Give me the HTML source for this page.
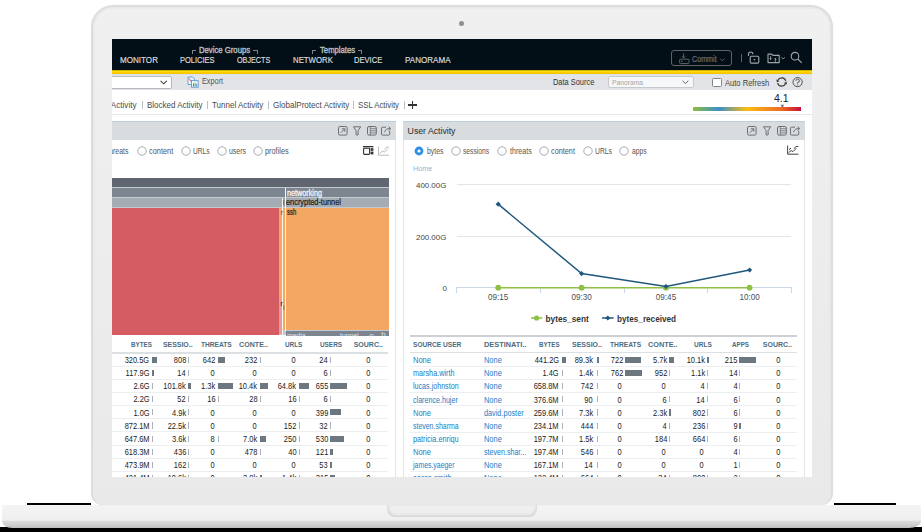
<!DOCTYPE html>
<html><head><meta charset="utf-8">
<style>
*{margin:0;padding:0;box-sizing:border-box}
html,body{width:922px;height:532px;overflow:hidden;background:#fff;font-family:"Liberation Sans",sans-serif}
.a{position:absolute}
.t{position:absolute;line-height:1;white-space:pre}
#blk{left:0;top:527.3px;width:922px;height:6px;background:#000}
#base{left:2px;top:505px;width:919px;height:22.5px;background:linear-gradient(#f4f4f4 0,#efefef 66%,#dadada 71%,#cdcdcd 88%,#bcbcbc 100%);border-radius:2px 1px 12px 10px/2px 1px 7px 7px}
#shl{left:27px;top:503px;width:64px;height:2px;background:#000}
#shr{left:833.5px;top:503px;width:62px;height:2px;background:#000}
#notch{left:387px;top:505px;width:150px;height:12px;background:linear-gradient(#f1f1f1,#ececec);border-radius:0 0 8px 8px;box-shadow:inset 0 -2px 3px rgba(0,0,0,.07),inset 3px 0 3px rgba(0,0,0,.04),inset -3px 0 3px rgba(0,0,0,.04)}
#bezel{left:90.5px;top:4.8px;width:742.5px;height:500.2px;background:linear-gradient(#f0f0f0,#e9e9e9);border:2.6px solid #dddddd;border-bottom:none;border-radius:22px 22px 12px 12px;box-shadow:inset 0 0 0 1.6px #e8e8e8,0 0 2px rgba(0,0,0,.05)}
#cam{left:459px;top:20.8px;width:5px;height:5px;border-radius:50%;background:#8f8f8f}
#screen{left:112px;top:39px;width:700px;height:438px;background:#fff;overflow:hidden}
#inner{position:absolute;left:-112px;top:-39px;width:922px;height:532px}
svg{position:absolute;overflow:visible}
</style></head><body>
<div class="a" id="blk"></div>
<div class="a" id="shl"></div>
<div class="a" id="shr"></div>
<div class="a" id="base"></div>
<div class="a" id="bezel"></div>
<div class="a" id="notch"></div>
<div class="a" id="cam"></div>
<div class="a" id="screen"><div id="inner">
<div class="a" style="left:112.00px;top:39.00px;width:700.00px;height:31.00px;background:#030f16;"></div>
<div class="a" style="left:112.00px;top:69.60px;width:700.00px;height:4.20px;background:linear-gradient(#b89400 0,#ffe000 35%,#f9cc00 65%,#f5c000 100%);"></div>
<div class="a" style="left:112.00px;top:73.80px;width:700.00px;height:15.80px;background:#e2e4e7;"></div>
<div class="a" style="left:112.00px;top:73.80px;width:700.00px;height:1.00px;background:#d9e0ee;"></div>
<div class="a" style="left:192.30px;top:50.10px;width:1.00px;height:4.20px;background:#7d8388;"></div>
<div class="a" style="left:192.30px;top:50.10px;width:4.20px;height:1.00px;background:#7d8388;"></div>
<div class="a" style="left:253.30px;top:50.10px;width:4.20px;height:1.00px;background:#7d8388;"></div>
<div class="a" style="left:256.50px;top:50.10px;width:1.00px;height:4.20px;background:#7d8388;"></div>
<div class="a" style="left:312.10px;top:50.10px;width:1.00px;height:4.20px;background:#7d8388;"></div>
<div class="a" style="left:312.10px;top:50.10px;width:4.20px;height:1.00px;background:#7d8388;"></div>
<div class="a" style="left:358.00px;top:50.10px;width:4.20px;height:1.00px;background:#7d8388;"></div>
<div class="a" style="left:361.20px;top:50.10px;width:1.00px;height:4.20px;background:#7d8388;"></div>
<div class="a" style="left:671.10px;top:50.30px;width:61.10px;height:16.00px;background:transparent;border:1.2px solid #5d6369;border-radius:3px"></div>
<svg style="left:679px;top:53px" width="11" height="11" viewBox="0 0 11 11"><path d="M4.6 0.4V4.8M3 3.4L4.6 5L6.2 3.4" stroke="#5d6369" stroke-width="1" fill="none"/><rect x="0.6" y="6.2" width="9.4" height="4.4" rx="1" stroke="#5d6369" stroke-width="1" fill="none"/><rect x="2" y="7.8" width="1.5" height="1.2" fill="#5d6369"/></svg>
<svg style="left:720px;top:58px" width="5" height="4" viewBox="0 0 5 4"><path d="M0.3 0.6L2.3 2.8L4.3 0.6" stroke="#5d6369" stroke-width="0.9" fill="none"/></svg>
<div class="a" style="left:741.20px;top:54.40px;width:1.00px;height:8.10px;background:#5d6369;"></div>
<svg style="left:747px;top:51px" width="14" height="13" viewBox="0 0 14 13"><path d="M1.5 5V3.2A2.2 2.2 0 0 1 5.9 3.2" stroke="#a0a5aa" stroke-width="1.1" fill="none"/><rect x="3.2" y="5.3" width="8.6" height="6.8" rx="1.2" stroke="#a0a5aa" stroke-width="1.1" fill="none"/><path d="M6.3 8L8.5 8L7.4 9.7Z" fill="#a0a5aa"/></svg>
<svg style="left:766.5px;top:53px" width="19" height="11" viewBox="0 0 19 11"><path d="M1 1.1H4.8L6 2.4H12.2V9.6H1Z" stroke="#a0a5aa" stroke-width="1.1" fill="none" stroke-linejoin="round"/><path d="M3.6 3.2V6.6M2.6 5.5L3.6 6.6L4.6 5.5M8.4 8.8V5.2M7.4 6.3L8.4 5.2L9.4 6.3" stroke="#a0a5aa" stroke-width="0.9" fill="none"/><path d="M14.6 4.3L16.2 6L17.8 4.3" stroke="#a0a5aa" stroke-width="0.9" fill="none"/></svg>
<svg style="left:790px;top:52px" width="13" height="12" viewBox="0 0 13 12"><circle cx="5" cy="4.2" r="3.8" stroke="#a0a5aa" stroke-width="1.1" fill="none"/><path d="M7.8 7L11.8 10.8" stroke="#a0a5aa" stroke-width="1.1"/></svg>
<div class="a" style="left:100.00px;top:75.50px;width:71.60px;height:13.00px;background:#fff;border:1px solid #b5b9bd;border-radius:2px"></div>
<svg style="left:160px;top:80px" width="8" height="5" viewBox="0 0 8 5"><path d="M0.6 0.8L3.7 3.8L6.8 0.8" stroke="#444" stroke-width="1.1" fill="none"/></svg>
<svg style="left:187px;top:76px" width="12" height="12" viewBox="0 0 12 12"><path d="M1 1H5.5L7.5 3V8.5H1Z" stroke="#5a9ad0" stroke-width="0.9" fill="#eef4fa"/><rect x="4.5" y="4.6" width="6.6" height="6.6" stroke="#5a9ad0" stroke-width="0.9" fill="#f4f8fc"/><path d="M2.3 2.5L4.2 5.5" stroke="#d24b4b" stroke-width="0.9"/><rect x="6" y="7.5" width="1" height="3" fill="#d24b4b"/><rect x="7.6" y="6.5" width="1" height="4" fill="#56b04f"/><rect x="9.1" y="8" width="1" height="2.5" fill="#4a8fd0"/></svg>
<div class="a" style="left:608.20px;top:75.80px;width:85.40px;height:12.70px;background:#f6f7f8;border:1px solid #c6cace;border-radius:2px"></div>
<svg style="left:682px;top:80px" width="7" height="5" viewBox="0 0 7 5"><path d="M0.5 0.8L3.4 3.6L6.3 0.8" stroke="#666" stroke-width="1" fill="none"/></svg>
<div class="a" style="left:712.20px;top:77.50px;width:9.70px;height:9.10px;background:#fff;border:1px solid #80858a;border-radius:1.5px"></div>
<svg style="left:776px;top:76.5px" width="12" height="11" viewBox="0 0 12 11"><path d="M9.76 3.91A4.2 4.2 0 0 0 1.89 3.23M1.64 6.09A4.2 4.2 0 0 0 9.51 6.78" stroke="#3a3a3a" stroke-width="1.2" fill="none"/><path d="M0.35 2.51L3.43 3.95L0.97 5.5Z M11.05 7.5L7.97 6.06L10.43 4.5Z" fill="#3a3a3a"/></svg>
<svg style="left:792px;top:76.5px" width="12" height="11" viewBox="0 0 12 11"><circle cx="5.6" cy="5.1" r="4.6" stroke="#555" stroke-width="1" fill="none"/><path d="M4 3.8A1.7 1.7 0 1 1 5.7 5.4V6.6" stroke="#555" stroke-width="1" fill="none"/><circle cx="5.7" cy="8" r="0.55" fill="#555"/></svg>
<svg style="left:779.6px;top:103.8px" width="5" height="6" viewBox="0 0 5 6"><path d="M0.5 0.6H4.3L2.4 5Z" fill="#4a6076" stroke="#fff" stroke-width="0.6"/></svg>
<div class="a" style="left:693.00px;top:107.20px;width:107.80px;height:3.70px;background:linear-gradient(90deg,#8dbe3c 0%,#3b8fc9 24%,#fbbd12 50%,#f28a22 70%,#ef6b1e 82%,#c2103c 100%);"></div>
<div class="a" style="left:112.00px;top:114.30px;width:700.00px;height:1.00px;background:#e5e7e9;"></div>
<div class="a" style="left:141.70px;top:100.60px;width:1.00px;height:8.00px;background:#b9c0c6;"></div>
<div class="a" style="left:206.80px;top:100.60px;width:1.00px;height:8.00px;background:#b9c0c6;"></div>
<div class="a" style="left:267.70px;top:100.60px;width:1.00px;height:8.00px;background:#b9c0c6;"></div>
<div class="a" style="left:353.25px;top:100.60px;width:1.00px;height:8.00px;background:#b9c0c6;"></div>
<div class="a" style="left:404.10px;top:100.60px;width:1.00px;height:8.00px;background:#b9c0c6;"></div>
<div class="a" style="left:408.20px;top:104.40px;width:8.50px;height:1.60px;background:#333;"></div>
<div class="a" style="left:411.65px;top:101.10px;width:1.60px;height:8.20px;background:#333;"></div>
<div class="a" style="left:100.00px;top:121.50px;width:295.70px;height:18.20px;background:#d9dcdf;"></div>
<div class="a" style="left:100.00px;top:121.30px;width:295.70px;height:1.20px;background:#b9cfdd;"></div>
<div class="a" style="left:403.00px;top:121.50px;width:401.50px;height:18.20px;background:#d9dcdf;"></div>
<div class="a" style="left:403.00px;top:121.30px;width:401.50px;height:1.20px;background:#b9cfdd;"></div>
<div class="a" style="left:394.80px;top:139.70px;width:1.00px;height:337.30px;background:#e3e5e7;"></div>
<div class="a" style="left:403.00px;top:139.70px;width:1.00px;height:337.30px;background:#e3e5e7;"></div>
<div class="a" style="left:803.50px;top:139.70px;width:1.00px;height:337.30px;background:#e3e5e7;"></div>
<svg style="left:338.00px;top:126.20px" width="10" height="10" viewBox="0 0 10 10"><rect x="0.5" y="0.5" width="8.6" height="8.6" rx="1.3" stroke="#6b7075" stroke-width="1" fill="none"/><path d="M2.8 6.8L6.8 2.8M3.8 2.8H6.8V5.8" stroke="#6b7075" stroke-width="1" fill="none"/></svg>
<svg style="left:353.20px;top:126.20px" width="10" height="10" viewBox="0 0 10 10"><path d="M0.5 0.8H7.7L5.1 4.6V8.9H3.1V4.6Z" stroke="#6b7075" stroke-width="1" fill="none" stroke-linejoin="round"/></svg>
<svg style="left:367.20px;top:126.20px" width="10" height="10" viewBox="0 0 10 10"><rect x="0.5" y="0.5" width="8.8" height="8.6" rx="1.5" stroke="#6b7075" stroke-width="1" fill="none"/><path d="M3.3 0.5V9.1M3.3 2.7H9.3M3.3 4.8H9.3M3.3 6.9H9.3" stroke="#6b7075" stroke-width="0.8" fill="none"/></svg>
<svg style="left:380.90px;top:126.20px" width="11" height="10" viewBox="0 0 11 10"><path d="M5 1.2H1.5A1 1 0 0 0 0.5 2.2V8.1A1 1 0 0 0 1.5 9.1H7.7A1 1 0 0 0 8.7 8.1V5" stroke="#6b7075" stroke-width="1" fill="none"/><path d="M3.6 6.2C4.2 3.6 6 2.6 9 2.6M7.6 0.6L9.8 2.6L7.6 4.6" stroke="#6b7075" stroke-width="1" fill="none"/></svg>
<svg style="left:747.30px;top:126.20px" width="10" height="10" viewBox="0 0 10 10"><rect x="0.5" y="0.5" width="8.6" height="8.6" rx="1.3" stroke="#6b7075" stroke-width="1" fill="none"/><path d="M2.8 6.8L6.8 2.8M3.8 2.8H6.8V5.8" stroke="#6b7075" stroke-width="1" fill="none"/></svg>
<svg style="left:762.50px;top:126.20px" width="10" height="10" viewBox="0 0 10 10"><path d="M0.5 0.8H7.7L5.1 4.6V8.9H3.1V4.6Z" stroke="#6b7075" stroke-width="1" fill="none" stroke-linejoin="round"/></svg>
<svg style="left:776.50px;top:126.20px" width="10" height="10" viewBox="0 0 10 10"><rect x="0.5" y="0.5" width="8.8" height="8.6" rx="1.5" stroke="#6b7075" stroke-width="1" fill="none"/><path d="M3.3 0.5V9.1M3.3 2.7H9.3M3.3 4.8H9.3M3.3 6.9H9.3" stroke="#6b7075" stroke-width="0.8" fill="none"/></svg>
<svg style="left:790.20px;top:126.20px" width="11" height="10" viewBox="0 0 11 10"><path d="M5 1.2H1.5A1 1 0 0 0 0.5 2.2V8.1A1 1 0 0 0 1.5 9.1H7.7A1 1 0 0 0 8.7 8.1V5" stroke="#6b7075" stroke-width="1" fill="none"/><path d="M3.6 6.2C4.2 3.6 6 2.6 9 2.6M7.6 0.6L9.8 2.6L7.6 4.6" stroke="#6b7075" stroke-width="1" fill="none"/></svg>
<svg style="left:136.50px;top:146.00px" width="10" height="10" viewBox="0 0 10 10"><circle cx="5" cy="5" r="4.2" stroke="#9ca2a7" stroke-width="0.9" fill="#fff"/></svg>
<svg style="left:180.50px;top:146.00px" width="10" height="10" viewBox="0 0 10 10"><circle cx="5" cy="5" r="4.2" stroke="#9ca2a7" stroke-width="0.9" fill="#fff"/></svg>
<svg style="left:216.50px;top:146.00px" width="10" height="10" viewBox="0 0 10 10"><circle cx="5" cy="5" r="4.2" stroke="#9ca2a7" stroke-width="0.9" fill="#fff"/></svg>
<svg style="left:253.00px;top:146.00px" width="10" height="10" viewBox="0 0 10 10"><circle cx="5" cy="5" r="4.2" stroke="#9ca2a7" stroke-width="0.9" fill="#fff"/></svg>
<svg style="left:362.5px;top:146px" width="11" height="9" viewBox="0 0 11 9"><rect x="0" y="0" width="10.4" height="1.3" fill="#333"/><rect x="0.6" y="2.2" width="6" height="6.2" rx="0.8" stroke="#333" stroke-width="1.1" fill="none"/><rect x="7.6" y="2.2" width="2.8" height="2.6" fill="#333"/><rect x="7.6" y="5.6" width="2.8" height="2.8" fill="#333"/></svg>
<svg style="left:378px;top:145.5px" width="12" height="10" viewBox="0 0 12 10"><path d="M0.5 0.5V9.2H11" stroke="#b0b4b8" stroke-width="0.9" fill="none"/><path d="M1.5 7.5L4.5 5L6.5 6.2L10 2.5M6.5 3.5L8.5 1.2L10.8 1" stroke="#b0b4b8" stroke-width="0.9" fill="none"/></svg>
<svg style="left:414.00px;top:146.00px" width="10" height="10" viewBox="0 0 10 10"><circle cx="5" cy="5" r="4.4" fill="#2f8fe6"/><circle cx="5" cy="5" r="1.6" fill="#fff"/></svg>
<svg style="left:451.00px;top:146.00px" width="10" height="10" viewBox="0 0 10 10"><circle cx="5" cy="5" r="4.2" stroke="#9ca2a7" stroke-width="0.9" fill="#fff"/></svg>
<svg style="left:497.00px;top:146.00px" width="10" height="10" viewBox="0 0 10 10"><circle cx="5" cy="5" r="4.2" stroke="#9ca2a7" stroke-width="0.9" fill="#fff"/></svg>
<svg style="left:538.60px;top:146.00px" width="10" height="10" viewBox="0 0 10 10"><circle cx="5" cy="5" r="4.2" stroke="#9ca2a7" stroke-width="0.9" fill="#fff"/></svg>
<svg style="left:583.00px;top:146.00px" width="10" height="10" viewBox="0 0 10 10"><circle cx="5" cy="5" r="4.2" stroke="#9ca2a7" stroke-width="0.9" fill="#fff"/></svg>
<svg style="left:619.40px;top:146.00px" width="10" height="10" viewBox="0 0 10 10"><circle cx="5" cy="5" r="4.2" stroke="#9ca2a7" stroke-width="0.9" fill="#fff"/></svg>
<svg style="left:786.5px;top:145px" width="12" height="10" viewBox="0 0 12 10"><path d="M0.6 0.5V9.2H11.5" stroke="#444" stroke-width="1" fill="none"/><path d="M1.6 7.6L4.2 5.6L6 6.6L9.3 3.3M7 3.8L9 1.4L11.4 1.6M2 4.6L4 3.2" stroke="#444" stroke-width="1" fill="none"/></svg>
<div class="a" style="left:112.00px;top:178.00px;width:277.00px;height:157.00px;background:#c4c9cf;"></div>
<div class="a" style="left:112.00px;top:178.00px;width:277.00px;height:9.00px;background:#5f6670;"></div>
<div class="a" style="left:112.00px;top:188.00px;width:277.00px;height:9.00px;background:#7c8590;"></div>
<div class="a" style="left:112.00px;top:198.00px;width:277.00px;height:9.00px;background:#a4abb3;"></div>
<div class="a" style="left:112.00px;top:208.00px;width:167.30px;height:126.70px;background:#d65c64;"></div>
<div class="a" style="left:279.30px;top:208.00px;width:109.70px;height:121.80px;background:#f4a762;"></div>
<div class="a" style="left:279.30px;top:299.20px;width:2.80px;height:35.30px;background:#e49aa2;"></div>
<div class="a" style="left:286.30px;top:330.90px;width:102.40px;height:5.00px;background:#7c8590;"></div>
<div class="a" style="left:285.20px;top:188.00px;width:1.10px;height:142.80px;background:#fbf3ea;"></div>
<div class="a" style="left:282.00px;top:198.00px;width:1.00px;height:136.50px;background:#fbf3ea;"></div>
<div class="a" style="left:456.80px;top:184.00px;width:334.50px;height:1.00px;background:#e3e5e7;"></div>
<div class="a" style="left:456.80px;top:236.10px;width:334.50px;height:1.00px;background:#e3e5e7;"></div>
<div class="a" style="left:456.80px;top:287.20px;width:334.50px;height:1.10px;background:#c9d8e6;"></div>
<div class="a" style="left:456.10px;top:287.20px;width:1.00px;height:5.50px;background:#c9d8e6;"></div>
<div class="a" style="left:539.50px;top:287.20px;width:1.00px;height:5.50px;background:#c9d8e6;"></div>
<div class="a" style="left:623.50px;top:287.20px;width:1.00px;height:5.50px;background:#c9d8e6;"></div>
<div class="a" style="left:706.90px;top:287.20px;width:1.00px;height:5.50px;background:#c9d8e6;"></div>
<div class="a" style="left:790.80px;top:287.20px;width:1.00px;height:5.50px;background:#c9d8e6;"></div>
<svg style="left:0;top:0" width="922" height="532" viewBox="0 0 922 532"><path d="M498.2 287.7H749.6" stroke="#8dc045" stroke-width="1.6" fill="none"/><circle cx="498.2" cy="287.7" r="2.9" fill="#8dc045"/><circle cx="581.6" cy="287.7" r="2.9" fill="#8dc045"/><circle cx="666.0" cy="287.7" r="2.9" fill="#8dc045"/><circle cx="749.6" cy="287.7" r="2.9" fill="#8dc045"/><path d="M498.2 204.2 L581.6 273.6 L666.0 286.5 L749.6 270.0" stroke="#21587f" stroke-width="1.5" fill="none"/><path d="M498.2 201.6L500.8 204.2L498.2 206.8L495.6 204.2Z" fill="#21587f"/><path d="M581.6 271.0L584.2 273.6L581.6 276.2L579.0 273.6Z" fill="#21587f"/><path d="M666.0 283.9L668.6 286.5L666.0 289.1L663.4 286.5Z" fill="#21587f"/><path d="M749.6 267.4L752.2 270.0L749.6 272.6L747.0 270.0Z" fill="#21587f"/><path d="M531 318H542.3" stroke="#8dc045" stroke-width="1.5"/><circle cx="536.6" cy="318" r="2.6" fill="#8dc045"/><path d="M602 318H613.6" stroke="#21587f" stroke-width="1.5"/><path d="M607.8 315.4L610.4 318L607.8 320.6L605.2 318Z" fill="#21587f"/></svg>
<div class="a" style="left:409.60px;top:335.40px;width:387.40px;height:2.00px;background:#cdd1d5;"></div>
<div class="a" style="left:112.00px;top:352.40px;width:276.00px;height:1.40px;background:#dde0e3;"></div>
<div class="a" style="left:410.00px;top:351.90px;width:387.00px;height:1.40px;background:#dde0e3;"></div>
<div class="a" style="left:152.00px;top:356.80px;width:4.50px;height:6.20px;background:#6c7780;"></div>
<div class="a" style="left:188.00px;top:356.80px;width:1.00px;height:6.20px;background:#aab3bb;"></div>
<div class="a" style="left:217.80px;top:356.80px;width:7.50px;height:6.20px;background:#6c7780;"></div>
<div class="a" style="left:260.00px;top:356.80px;width:1.00px;height:6.20px;background:#aab3bb;"></div>
<div class="a" style="left:330.00px;top:356.80px;width:1.00px;height:6.20px;background:#aab3bb;"></div>
<div class="a" style="left:112.00px;top:365.80px;width:276.00px;height:1.00px;background:#eceef0;"></div>
<div class="a" style="left:152.00px;top:369.92px;width:1.50px;height:6.20px;background:#6c7780;"></div>
<div class="a" style="left:188.00px;top:369.92px;width:1.00px;height:6.20px;background:#aab3bb;"></div>
<div class="a" style="left:330.00px;top:369.92px;width:1.00px;height:6.20px;background:#aab3bb;"></div>
<div class="a" style="left:112.00px;top:378.92px;width:276.00px;height:1.00px;background:#eceef0;"></div>
<div class="a" style="left:152.00px;top:383.04px;width:1.00px;height:6.20px;background:#aab3bb;"></div>
<div class="a" style="left:188.00px;top:383.04px;width:3.20px;height:6.20px;background:#6c7780;"></div>
<div class="a" style="left:217.80px;top:383.04px;width:15.00px;height:6.20px;background:#6c7780;"></div>
<div class="a" style="left:260.00px;top:383.04px;width:8.00px;height:6.20px;background:#6c7780;"></div>
<div class="a" style="left:298.70px;top:383.04px;width:10.30px;height:6.20px;background:#6c7780;"></div>
<div class="a" style="left:330.00px;top:383.04px;width:17.40px;height:6.20px;background:#6c7780;"></div>
<div class="a" style="left:112.00px;top:392.04px;width:276.00px;height:1.00px;background:#eceef0;"></div>
<div class="a" style="left:152.00px;top:396.16px;width:1.00px;height:6.20px;background:#aab3bb;"></div>
<div class="a" style="left:188.00px;top:396.16px;width:1.00px;height:6.20px;background:#aab3bb;"></div>
<div class="a" style="left:217.80px;top:396.16px;width:1.00px;height:6.20px;background:#aab3bb;"></div>
<div class="a" style="left:260.00px;top:396.16px;width:1.00px;height:6.20px;background:#aab3bb;"></div>
<div class="a" style="left:298.70px;top:396.16px;width:1.00px;height:6.20px;background:#aab3bb;"></div>
<div class="a" style="left:330.00px;top:396.16px;width:1.00px;height:6.20px;background:#aab3bb;"></div>
<div class="a" style="left:112.00px;top:405.16px;width:276.00px;height:1.00px;background:#eceef0;"></div>
<div class="a" style="left:152.00px;top:409.28px;width:1.00px;height:6.20px;background:#aab3bb;"></div>
<div class="a" style="left:188.00px;top:409.28px;width:1.00px;height:6.20px;background:#aab3bb;"></div>
<div class="a" style="left:330.00px;top:409.28px;width:11.00px;height:6.20px;background:#6c7780;"></div>
<div class="a" style="left:112.00px;top:418.28px;width:276.00px;height:1.00px;background:#eceef0;"></div>
<div class="a" style="left:152.00px;top:422.40px;width:1.00px;height:6.20px;background:#aab3bb;"></div>
<div class="a" style="left:188.00px;top:422.40px;width:1.00px;height:6.20px;background:#aab3bb;"></div>
<div class="a" style="left:298.70px;top:422.40px;width:1.00px;height:6.20px;background:#aab3bb;"></div>
<div class="a" style="left:330.00px;top:422.40px;width:1.00px;height:6.20px;background:#aab3bb;"></div>
<div class="a" style="left:112.00px;top:431.40px;width:276.00px;height:1.00px;background:#eceef0;"></div>
<div class="a" style="left:152.00px;top:435.52px;width:1.00px;height:6.20px;background:#aab3bb;"></div>
<div class="a" style="left:188.00px;top:435.52px;width:1.00px;height:6.20px;background:#aab3bb;"></div>
<div class="a" style="left:217.80px;top:435.52px;width:1.00px;height:6.20px;background:#aab3bb;"></div>
<div class="a" style="left:260.00px;top:435.52px;width:6.30px;height:6.20px;background:#6c7780;"></div>
<div class="a" style="left:298.70px;top:435.52px;width:1.00px;height:6.20px;background:#aab3bb;"></div>
<div class="a" style="left:330.00px;top:435.52px;width:14.30px;height:6.20px;background:#6c7780;"></div>
<div class="a" style="left:112.00px;top:444.52px;width:276.00px;height:1.00px;background:#eceef0;"></div>
<div class="a" style="left:152.00px;top:448.64px;width:1.00px;height:6.20px;background:#aab3bb;"></div>
<div class="a" style="left:188.00px;top:448.64px;width:1.00px;height:6.20px;background:#aab3bb;"></div>
<div class="a" style="left:260.00px;top:448.64px;width:1.00px;height:6.20px;background:#aab3bb;"></div>
<div class="a" style="left:298.70px;top:448.64px;width:1.00px;height:6.20px;background:#aab3bb;"></div>
<div class="a" style="left:330.00px;top:448.64px;width:3.00px;height:6.20px;background:#6c7780;"></div>
<div class="a" style="left:112.00px;top:457.64px;width:276.00px;height:1.00px;background:#eceef0;"></div>
<div class="a" style="left:152.00px;top:461.76px;width:1.00px;height:6.20px;background:#aab3bb;"></div>
<div class="a" style="left:188.00px;top:461.76px;width:1.00px;height:6.20px;background:#aab3bb;"></div>
<div class="a" style="left:330.00px;top:461.76px;width:2.00px;height:6.20px;background:#6c7780;"></div>
<div class="a" style="left:112.00px;top:470.76px;width:276.00px;height:1.00px;background:#eceef0;"></div>
<div class="a" style="left:152.00px;top:474.88px;width:1.00px;height:6.20px;background:#aab3bb;"></div>
<div class="a" style="left:188.00px;top:474.88px;width:1.00px;height:6.20px;background:#aab3bb;"></div>
<div class="a" style="left:260.00px;top:474.88px;width:2.00px;height:6.20px;background:#6c7780;"></div>
<div class="a" style="left:298.70px;top:474.88px;width:1.00px;height:6.20px;background:#aab3bb;"></div>
<div class="a" style="left:330.00px;top:474.88px;width:5.00px;height:6.20px;background:#6c7780;"></div>
<div class="a" style="left:561.80px;top:356.90px;width:4.50px;height:6.20px;background:#6c7780;"></div>
<div class="a" style="left:596.50px;top:356.90px;width:2.50px;height:6.20px;background:#6c7780;"></div>
<div class="a" style="left:625.40px;top:356.90px;width:15.80px;height:6.20px;background:#6c7780;"></div>
<div class="a" style="left:668.70px;top:356.90px;width:5.00px;height:6.20px;background:#6c7780;"></div>
<div class="a" style="left:707.20px;top:356.90px;width:2.00px;height:6.20px;background:#6c7780;"></div>
<div class="a" style="left:739.00px;top:356.90px;width:17.30px;height:6.20px;background:#6c7780;"></div>
<div class="a" style="left:410.00px;top:365.90px;width:387.00px;height:1.00px;background:#eceef0;"></div>
<div class="a" style="left:561.80px;top:370.02px;width:1.00px;height:6.20px;background:#aab3bb;"></div>
<div class="a" style="left:596.50px;top:370.02px;width:1.00px;height:6.20px;background:#aab3bb;"></div>
<div class="a" style="left:625.40px;top:370.02px;width:16.50px;height:6.20px;background:#6c7780;"></div>
<div class="a" style="left:668.70px;top:370.02px;width:1.00px;height:6.20px;background:#aab3bb;"></div>
<div class="a" style="left:707.20px;top:370.02px;width:1.00px;height:6.20px;background:#aab3bb;"></div>
<div class="a" style="left:739.00px;top:370.02px;width:1.00px;height:6.20px;background:#aab3bb;"></div>
<div class="a" style="left:410.00px;top:379.02px;width:387.00px;height:1.00px;background:#eceef0;"></div>
<div class="a" style="left:561.80px;top:383.14px;width:1.00px;height:6.20px;background:#aab3bb;"></div>
<div class="a" style="left:596.50px;top:383.14px;width:1.00px;height:6.20px;background:#aab3bb;"></div>
<div class="a" style="left:707.20px;top:383.14px;width:1.00px;height:6.20px;background:#aab3bb;"></div>
<div class="a" style="left:739.00px;top:383.14px;width:1.00px;height:6.20px;background:#aab3bb;"></div>
<div class="a" style="left:410.00px;top:392.14px;width:387.00px;height:1.00px;background:#eceef0;"></div>
<div class="a" style="left:561.80px;top:396.26px;width:1.00px;height:6.20px;background:#aab3bb;"></div>
<div class="a" style="left:596.50px;top:396.26px;width:1.00px;height:6.20px;background:#aab3bb;"></div>
<div class="a" style="left:668.70px;top:396.26px;width:1.00px;height:6.20px;background:#aab3bb;"></div>
<div class="a" style="left:707.20px;top:396.26px;width:1.00px;height:6.20px;background:#aab3bb;"></div>
<div class="a" style="left:739.00px;top:396.26px;width:1.00px;height:6.20px;background:#aab3bb;"></div>
<div class="a" style="left:410.00px;top:405.26px;width:387.00px;height:1.00px;background:#eceef0;"></div>
<div class="a" style="left:561.80px;top:409.38px;width:1.00px;height:6.20px;background:#aab3bb;"></div>
<div class="a" style="left:596.50px;top:409.38px;width:1.00px;height:6.20px;background:#aab3bb;"></div>
<div class="a" style="left:668.70px;top:409.38px;width:2.00px;height:6.20px;background:#6c7780;"></div>
<div class="a" style="left:707.20px;top:409.38px;width:1.00px;height:6.20px;background:#aab3bb;"></div>
<div class="a" style="left:739.00px;top:409.38px;width:1.00px;height:6.20px;background:#aab3bb;"></div>
<div class="a" style="left:410.00px;top:418.38px;width:387.00px;height:1.00px;background:#eceef0;"></div>
<div class="a" style="left:561.80px;top:422.50px;width:1.00px;height:6.20px;background:#aab3bb;"></div>
<div class="a" style="left:596.50px;top:422.50px;width:1.00px;height:6.20px;background:#aab3bb;"></div>
<div class="a" style="left:668.70px;top:422.50px;width:1.00px;height:6.20px;background:#aab3bb;"></div>
<div class="a" style="left:707.20px;top:422.50px;width:1.00px;height:6.20px;background:#aab3bb;"></div>
<div class="a" style="left:739.00px;top:422.50px;width:1.50px;height:6.20px;background:#6c7780;"></div>
<div class="a" style="left:410.00px;top:431.50px;width:387.00px;height:1.00px;background:#eceef0;"></div>
<div class="a" style="left:561.80px;top:435.62px;width:1.00px;height:6.20px;background:#aab3bb;"></div>
<div class="a" style="left:596.50px;top:435.62px;width:1.00px;height:6.20px;background:#aab3bb;"></div>
<div class="a" style="left:668.70px;top:435.62px;width:1.00px;height:6.20px;background:#aab3bb;"></div>
<div class="a" style="left:707.20px;top:435.62px;width:1.00px;height:6.20px;background:#aab3bb;"></div>
<div class="a" style="left:739.00px;top:435.62px;width:1.00px;height:6.20px;background:#aab3bb;"></div>
<div class="a" style="left:410.00px;top:444.62px;width:387.00px;height:1.00px;background:#eceef0;"></div>
<div class="a" style="left:561.80px;top:448.74px;width:1.00px;height:6.20px;background:#aab3bb;"></div>
<div class="a" style="left:596.50px;top:448.74px;width:1.00px;height:6.20px;background:#aab3bb;"></div>
<div class="a" style="left:739.00px;top:448.74px;width:1.00px;height:6.20px;background:#aab3bb;"></div>
<div class="a" style="left:410.00px;top:457.74px;width:387.00px;height:1.00px;background:#eceef0;"></div>
<div class="a" style="left:561.80px;top:461.86px;width:1.00px;height:6.20px;background:#aab3bb;"></div>
<div class="a" style="left:596.50px;top:461.86px;width:1.00px;height:6.20px;background:#aab3bb;"></div>
<div class="a" style="left:739.00px;top:461.86px;width:1.00px;height:6.20px;background:#aab3bb;"></div>
<div class="a" style="left:410.00px;top:470.86px;width:387.00px;height:1.00px;background:#eceef0;"></div>
<div class="a" style="left:561.80px;top:474.98px;width:1.00px;height:6.20px;background:#aab3bb;"></div>
<div class="a" style="left:596.50px;top:474.98px;width:1.00px;height:6.20px;background:#aab3bb;"></div>
<div class="a" style="left:668.70px;top:474.98px;width:1.00px;height:6.20px;background:#aab3bb;"></div>
<div class="a" style="left:707.20px;top:474.98px;width:1.00px;height:6.20px;background:#aab3bb;"></div>
<div class="a" style="left:739.00px;top:474.98px;width:1.00px;height:6.20px;background:#aab3bb;"></div>
<div class="a" style="left:286.3px;top:330.9px;width:102.4px;height:5px;overflow:hidden"><span class="t" style="left:1px;top:1.2px;font-size:8px;color:#dfe3e7;transform:scaleX(0.85);transform-origin:left">media</span><span class="t" style="left:54px;top:1.2px;font-size:8px;color:#dfe3e7;transform:scaleX(0.85);transform-origin:left">tunnel</span><span class="t" style="left:83px;top:1.2px;font-size:8px;color:#dfe3e7">o</span><span class="t" style="left:95px;top:0.5px;font-size:8px;color:#dfe3e7">h</span></div>
<span class="t" style="left:280.2px;top:299.5px;font-size:8px;color:#222">r</span><span class="t" style="left:283px;top:304px;font-size:7px;color:#7a4a20">i</span>
<span class="t" style="left:119.80px;top:56.00px;font-size:9.00px;color:#d5d9dc;-webkit-text-stroke:0.2px #d5d9dc;transform:scaleX(0.897);transform-origin:left">MONITOR</span>
<span class="t" style="left:179.70px;top:56.00px;font-size:9.00px;color:#d5d9dc;-webkit-text-stroke:0.2px #d5d9dc;transform:scaleX(0.833);transform-origin:left">POLICIES</span>
<span class="t" style="left:237.00px;top:56.00px;font-size:9.00px;color:#d5d9dc;-webkit-text-stroke:0.2px #d5d9dc;transform:scaleX(0.802);transform-origin:left">OBJECTS</span>
<span class="t" style="left:292.80px;top:56.00px;font-size:9.00px;color:#d5d9dc;-webkit-text-stroke:0.2px #d5d9dc;transform:scaleX(0.867);transform-origin:left">NETWORK</span>
<span class="t" style="left:354.40px;top:56.00px;font-size:9.00px;color:#d5d9dc;-webkit-text-stroke:0.2px #d5d9dc;transform:scaleX(0.841);transform-origin:left">DEVICE</span>
<span class="t" style="left:405.00px;top:56.00px;font-size:9.00px;color:#d5d9dc;-webkit-text-stroke:0.2px #d5d9dc;transform:scaleX(0.895);transform-origin:left">PANORAMA</span>
<span class="t" style="left:199.00px;top:46.00px;font-size:8.43px;color:#b4b9be;-webkit-text-stroke:0.4px #b4b9be;transform:scaleX(0.917);transform-origin:left">Device Groups</span>
<span class="t" style="left:319.90px;top:46.00px;font-size:8.43px;color:#b4b9be;-webkit-text-stroke:0.4px #b4b9be;transform:scaleX(0.916);transform-origin:left">Templates</span>
<span class="t" style="left:692.00px;top:55.00px;font-size:8.43px;color:#6a7076;-webkit-text-stroke:0.2px #6a7076;transform:scaleX(0.849);transform-origin:left">Commit</span>
<span class="t" style="left:201.80px;top:77.00px;font-size:8.86px;color:#555;transform:scaleX(0.825);transform-origin:left">Export</span>
<span class="t" style="left:552.50px;top:78.00px;font-size:9.00px;color:#333;transform:scaleX(0.825);transform-origin:left">Data Source</span>
<span class="t" style="left:611.70px;top:79.00px;font-size:8.00px;color:#a3a7ab;transform:scaleX(0.842);transform-origin:left">Panorama</span>
<span class="t" style="left:724.90px;top:79.00px;font-size:8.29px;color:#444;transform:scaleX(0.914);transform-origin:left">Auto Refresh</span>
<span class="t" style="left:774.40px;top:94.00px;font-size:10.29px;color:#222;transform:scaleX(1.022);transform-origin:left">4.1</span>
<span class="t" style="left:108.48px;top:101.00px;font-size:9.00px;color:#4a4a4a;transform:scaleX(0.900);transform-origin:right">Activity</span>
<span class="t" style="left:146.70px;top:101.00px;font-size:9.00px;color:#4a4a4a;transform:scaleX(0.888);transform-origin:left">Blocked Activity</span>
<span class="t" style="left:212.00px;top:101.00px;font-size:9.00px;color:#4a4a4a;transform:scaleX(0.889);transform-origin:left">Tunnel Activity</span>
<span class="t" style="left:272.70px;top:101.00px;font-size:9.00px;color:#4a4a4a;transform:scaleX(0.896);transform-origin:left">GlobalProtect Activity</span>
<span class="t" style="left:358.00px;top:101.00px;font-size:9.00px;color:#4a4a4a;transform:scaleX(0.869);transform-origin:left">SSL Activity</span>
<span class="t" style="left:105.12px;top:147.00px;font-size:8.43px;color:#555;transform:scaleX(0.820);transform-origin:right">areats</span>
<span class="t" style="left:148.70px;top:147.00px;font-size:8.43px;color:#555;transform:scaleX(0.878);transform-origin:left">content</span>
<span class="t" style="left:193.00px;top:147.00px;font-size:8.43px;color:#555;transform:scaleX(0.789);transform-origin:left">URLs</span>
<span class="t" style="left:228.75px;top:147.00px;font-size:8.43px;color:#555;transform:scaleX(0.824);transform-origin:left">users</span>
<span class="t" style="left:265.30px;top:147.00px;font-size:8.43px;color:#555;transform:scaleX(0.871);transform-origin:left">profiles</span>
<span class="t" style="left:426.50px;top:147.00px;font-size:8.43px;color:#555;transform:scaleX(0.821);transform-origin:left">bytes</span>
<span class="t" style="left:463.30px;top:147.00px;font-size:8.43px;color:#555;transform:scaleX(0.798);transform-origin:left">sessions</span>
<span class="t" style="left:509.50px;top:147.00px;font-size:8.43px;color:#555;transform:scaleX(0.844);transform-origin:left">threats</span>
<span class="t" style="left:551.40px;top:147.00px;font-size:8.43px;color:#555;transform:scaleX(0.867);transform-origin:left">content</span>
<span class="t" style="left:595.30px;top:147.00px;font-size:8.43px;color:#555;transform:scaleX(0.804);transform-origin:left">URLs</span>
<span class="t" style="left:631.80px;top:147.00px;font-size:8.43px;color:#555;transform:scaleX(0.795);transform-origin:left">apps</span>
<span class="t" style="left:287.00px;top:189.00px;font-size:8.71px;color:#f4f6f8;-webkit-text-stroke:0.3px #f4f6f8;transform:scaleX(0.831);transform-origin:left">networking</span>
<span class="t" style="left:286.30px;top:198.00px;font-size:9.29px;color:#1a1a1a;-webkit-text-stroke:0.2px #1a1a1a;transform:scaleX(0.795);transform-origin:left">encrypted-tunnel</span>
<span class="t" style="left:287.20px;top:208.00px;font-size:8.86px;color:#1a1a1a;-webkit-text-stroke:0.2px #1a1a1a;transform:scaleX(0.668);transform-origin:left">ssh</span>
<span class="t" style="left:280.50px;top:209.00px;font-size:7.86px;color:#1a1a1a;transform:scaleX(0.648);transform-origin:left">r</span>
<span class="t" style="left:283.10px;top:198.00px;font-size:8.86px;color:#1a1a1a;transform:scaleX(0.610);transform-origin:left">i</span>
<span class="t" style="left:416.30px;top:182.00px;font-size:8.00px;color:#444;transform:scaleX(0.987);transform-origin:left">400.00G</span>
<span class="t" style="left:416.30px;top:234.00px;font-size:8.00px;color:#444;transform:scaleX(0.987);transform-origin:left">200.00G</span>
<span class="t" style="left:442.55px;top:285.00px;font-size:8.00px;color:#444">0</span>
<span class="t" style="left:488.03px;top:294.00px;font-size:8.14px;color:#505050">09:15</span>
<span class="t" style="left:571.43px;top:294.00px;font-size:8.14px;color:#505050">09:30</span>
<span class="t" style="left:655.83px;top:294.00px;font-size:8.14px;color:#505050">09:45</span>
<span class="t" style="left:739.43px;top:294.00px;font-size:8.14px;color:#505050">10:00</span>
<span class="t" style="left:412.60px;top:165.00px;font-size:7.71px;color:#8cb6d6;transform:scaleX(0.943);transform-origin:left">Home</span>
<span class="t" style="left:545.50px;top:315.00px;font-size:8.29px;color:#333;font-weight:bold">bytes_sent</span>
<span class="t" style="left:616.70px;top:315.00px;font-size:8.29px;color:#333;font-weight:bold;transform:scaleX(0.987);transform-origin:left">bytes_received</span>
<span class="t" style="left:130.50px;top:341.00px;font-size:7.00px;color:#4d6b80;font-weight:bold;transform:scaleX(0.900);transform-origin:left">BYTES</span>
<span class="t" style="left:162.80px;top:341.00px;font-size:7.00px;color:#4d6b80;font-weight:bold;transform:scaleX(0.988);transform-origin:left">SESSIO..</span>
<span class="t" style="left:201.20px;top:341.00px;font-size:7.00px;color:#4d6b80;font-weight:bold;transform:scaleX(0.946);transform-origin:left">THREATS</span>
<span class="t" style="left:239.00px;top:341.00px;font-size:7.00px;color:#4d6b80;font-weight:bold;transform:scaleX(1.018);transform-origin:left">CONTE..</span>
<span class="t" style="left:284.50px;top:341.00px;font-size:7.00px;color:#4d6b80;font-weight:bold;transform:scaleX(0.908);transform-origin:left">URLS</span>
<span class="t" style="left:320.00px;top:341.00px;font-size:7.00px;color:#4d6b80;font-weight:bold;transform:scaleX(0.912);transform-origin:left">USERS</span>
<span class="t" style="left:353.70px;top:341.00px;font-size:7.00px;color:#4d6b80;font-weight:bold">SOURC..</span>
<span class="t" style="left:413.40px;top:341.00px;font-size:7.00px;color:#4d6b80;font-weight:bold;transform:scaleX(0.941);transform-origin:left">SOURCE USER</span>
<span class="t" style="left:484.00px;top:341.00px;font-size:7.00px;color:#4d6b80;font-weight:bold;transform:scaleX(1.054);transform-origin:left">DESTINATI..</span>
<span class="t" style="left:539.40px;top:341.00px;font-size:7.00px;color:#4d6b80;font-weight:bold;transform:scaleX(0.882);transform-origin:left">BYTES</span>
<span class="t" style="left:572.00px;top:341.00px;font-size:7.00px;color:#4d6b80;font-weight:bold">SESSIO..</span>
<span class="t" style="left:610.40px;top:341.00px;font-size:7.00px;color:#4d6b80;font-weight:bold;transform:scaleX(0.956);transform-origin:left">THREATS</span>
<span class="t" style="left:648.40px;top:341.00px;font-size:7.00px;color:#4d6b80;font-weight:bold;transform:scaleX(1.043);transform-origin:left">CONTE..</span>
<span class="t" style="left:693.60px;top:341.00px;font-size:7.00px;color:#4d6b80;font-weight:bold;transform:scaleX(0.934);transform-origin:left">URLS</span>
<span class="t" style="left:731.50px;top:341.00px;font-size:7.00px;color:#4d6b80;font-weight:bold;transform:scaleX(0.892);transform-origin:left">APPS</span>
<span class="t" style="left:762.80px;top:341.00px;font-size:7.00px;color:#4d6b80;font-weight:bold">SOURC..</span>
<span class="t" style="left:121.31px;top:356.00px;font-size:8.57px;color:#222;transform:scaleX(0.870);transform-origin:right">320.5G</span>
<span class="t" style="left:171.50px;top:356.00px;font-size:8.57px;color:#222;transform:scaleX(0.870);transform-origin:right">808</span>
<span class="t" style="left:200.90px;top:356.00px;font-size:8.57px;color:#222;transform:scaleX(0.870);transform-origin:right">642</span>
<span class="t" style="left:242.90px;top:356.00px;font-size:8.57px;color:#222;transform:scaleX(0.870);transform-origin:right">232</span>
<span class="t" style="left:290.83px;top:356.00px;font-size:8.57px;color:#222;transform:scaleX(0.870);transform-origin:right">0</span>
<span class="t" style="left:318.27px;top:356.00px;font-size:8.57px;color:#222;transform:scaleX(0.870);transform-origin:right">24</span>
<span class="t" style="left:366.12px;top:356.00px;font-size:8.57px;color:#222;transform:scaleX(0.870);transform-origin:center">0</span>
<span class="t" style="left:121.95px;top:369.00px;font-size:8.57px;color:#222;transform:scaleX(0.870);transform-origin:right">117.9G</span>
<span class="t" style="left:176.27px;top:369.00px;font-size:8.57px;color:#222;transform:scaleX(0.870);transform-origin:right">14</span>
<span class="t" style="left:209.63px;top:369.00px;font-size:8.57px;color:#222;transform:scaleX(0.870);transform-origin:right">0</span>
<span class="t" style="left:251.63px;top:369.00px;font-size:8.57px;color:#222;transform:scaleX(0.870);transform-origin:right">0</span>
<span class="t" style="left:290.83px;top:369.00px;font-size:8.57px;color:#222;transform:scaleX(0.870);transform-origin:right">0</span>
<span class="t" style="left:323.03px;top:369.00px;font-size:8.57px;color:#222;transform:scaleX(0.870);transform-origin:right">6</span>
<span class="t" style="left:366.12px;top:369.00px;font-size:8.57px;color:#222;transform:scaleX(0.870);transform-origin:center">0</span>
<span class="t" style="left:130.82px;top:382.00px;font-size:8.57px;color:#222;transform:scaleX(0.870);transform-origin:right">2.6G</span>
<span class="t" style="left:160.08px;top:382.00px;font-size:8.57px;color:#222;transform:scaleX(0.870);transform-origin:right">101.8k</span>
<span class="t" style="left:199.01px;top:382.00px;font-size:8.57px;color:#222;transform:scaleX(0.870);transform-origin:right">1.3k</span>
<span class="t" style="left:236.25px;top:382.00px;font-size:8.57px;color:#222;transform:scaleX(0.870);transform-origin:right">10.4k</span>
<span class="t" style="left:275.45px;top:382.00px;font-size:8.57px;color:#222;transform:scaleX(0.870);transform-origin:right">64.8k</span>
<span class="t" style="left:313.50px;top:382.00px;font-size:8.57px;color:#222;transform:scaleX(0.870);transform-origin:right">655</span>
<span class="t" style="left:366.12px;top:382.00px;font-size:8.57px;color:#222;transform:scaleX(0.870);transform-origin:center">0</span>
<span class="t" style="left:130.82px;top:395.00px;font-size:8.57px;color:#222;transform:scaleX(0.870);transform-origin:right">2.2G</span>
<span class="t" style="left:176.27px;top:395.00px;font-size:8.57px;color:#222;transform:scaleX(0.870);transform-origin:right">52</span>
<span class="t" style="left:205.67px;top:395.00px;font-size:8.57px;color:#222;transform:scaleX(0.870);transform-origin:right">16</span>
<span class="t" style="left:247.67px;top:395.00px;font-size:8.57px;color:#222;transform:scaleX(0.870);transform-origin:right">28</span>
<span class="t" style="left:286.87px;top:395.00px;font-size:8.57px;color:#222;transform:scaleX(0.870);transform-origin:right">16</span>
<span class="t" style="left:323.03px;top:395.00px;font-size:8.57px;color:#222;transform:scaleX(0.870);transform-origin:right">6</span>
<span class="t" style="left:366.12px;top:395.00px;font-size:8.57px;color:#222;transform:scaleX(0.870);transform-origin:center">0</span>
<span class="t" style="left:130.82px;top:409.00px;font-size:8.57px;color:#222;transform:scaleX(0.870);transform-origin:right">1.0G</span>
<span class="t" style="left:169.61px;top:409.00px;font-size:8.57px;color:#222;transform:scaleX(0.870);transform-origin:right">4.9k</span>
<span class="t" style="left:209.63px;top:409.00px;font-size:8.57px;color:#222;transform:scaleX(0.870);transform-origin:right">0</span>
<span class="t" style="left:251.63px;top:409.00px;font-size:8.57px;color:#222;transform:scaleX(0.870);transform-origin:right">0</span>
<span class="t" style="left:290.83px;top:409.00px;font-size:8.57px;color:#222;transform:scaleX(0.870);transform-origin:right">0</span>
<span class="t" style="left:313.50px;top:409.00px;font-size:8.57px;color:#222;transform:scaleX(0.870);transform-origin:right">399</span>
<span class="t" style="left:366.12px;top:409.00px;font-size:8.57px;color:#222;transform:scaleX(0.870);transform-origin:center">0</span>
<span class="t" style="left:120.84px;top:422.00px;font-size:8.57px;color:#222;transform:scaleX(0.870);transform-origin:right">872.1M</span>
<span class="t" style="left:164.85px;top:422.00px;font-size:8.57px;color:#222;transform:scaleX(0.870);transform-origin:right">22.5k</span>
<span class="t" style="left:209.63px;top:422.00px;font-size:8.57px;color:#222;transform:scaleX(0.870);transform-origin:right">0</span>
<span class="t" style="left:251.63px;top:422.00px;font-size:8.57px;color:#222;transform:scaleX(0.870);transform-origin:right">0</span>
<span class="t" style="left:282.10px;top:422.00px;font-size:8.57px;color:#222;transform:scaleX(0.870);transform-origin:right">152</span>
<span class="t" style="left:318.27px;top:422.00px;font-size:8.57px;color:#222;transform:scaleX(0.870);transform-origin:right">32</span>
<span class="t" style="left:366.12px;top:422.00px;font-size:8.57px;color:#222;transform:scaleX(0.870);transform-origin:center">0</span>
<span class="t" style="left:120.84px;top:435.00px;font-size:8.57px;color:#222;transform:scaleX(0.870);transform-origin:right">647.6M</span>
<span class="t" style="left:169.61px;top:435.00px;font-size:8.57px;color:#222;transform:scaleX(0.870);transform-origin:right">3.6k</span>
<span class="t" style="left:210.43px;top:435.00px;font-size:8.57px;color:#222;transform:scaleX(0.870);transform-origin:right">8</span>
<span class="t" style="left:241.01px;top:435.00px;font-size:8.57px;color:#222;transform:scaleX(0.870);transform-origin:right">7.0k</span>
<span class="t" style="left:282.10px;top:435.00px;font-size:8.57px;color:#222;transform:scaleX(0.870);transform-origin:right">250</span>
<span class="t" style="left:313.50px;top:435.00px;font-size:8.57px;color:#222;transform:scaleX(0.870);transform-origin:right">530</span>
<span class="t" style="left:366.12px;top:435.00px;font-size:8.57px;color:#222;transform:scaleX(0.870);transform-origin:center">0</span>
<span class="t" style="left:120.84px;top:448.00px;font-size:8.57px;color:#222;transform:scaleX(0.870);transform-origin:right">618.3M</span>
<span class="t" style="left:171.50px;top:448.00px;font-size:8.57px;color:#222;transform:scaleX(0.870);transform-origin:right">436</span>
<span class="t" style="left:209.63px;top:448.00px;font-size:8.57px;color:#222;transform:scaleX(0.870);transform-origin:right">0</span>
<span class="t" style="left:242.90px;top:448.00px;font-size:8.57px;color:#222;transform:scaleX(0.870);transform-origin:right">478</span>
<span class="t" style="left:286.87px;top:448.00px;font-size:8.57px;color:#222;transform:scaleX(0.870);transform-origin:right">40</span>
<span class="t" style="left:313.50px;top:448.00px;font-size:8.57px;color:#222;transform:scaleX(0.870);transform-origin:right">121</span>
<span class="t" style="left:366.12px;top:448.00px;font-size:8.57px;color:#222;transform:scaleX(0.870);transform-origin:center">0</span>
<span class="t" style="left:120.84px;top:461.00px;font-size:8.57px;color:#222;transform:scaleX(0.870);transform-origin:right">473.9M</span>
<span class="t" style="left:171.50px;top:461.00px;font-size:8.57px;color:#222;transform:scaleX(0.870);transform-origin:right">162</span>
<span class="t" style="left:209.63px;top:461.00px;font-size:8.57px;color:#222;transform:scaleX(0.870);transform-origin:right">0</span>
<span class="t" style="left:251.63px;top:461.00px;font-size:8.57px;color:#222;transform:scaleX(0.870);transform-origin:right">0</span>
<span class="t" style="left:290.83px;top:461.00px;font-size:8.57px;color:#222;transform:scaleX(0.870);transform-origin:right">0</span>
<span class="t" style="left:318.27px;top:461.00px;font-size:8.57px;color:#222;transform:scaleX(0.870);transform-origin:right">53</span>
<span class="t" style="left:366.12px;top:461.00px;font-size:8.57px;color:#222;transform:scaleX(0.870);transform-origin:center">0</span>
<span class="t" style="left:120.84px;top:474.00px;font-size:8.57px;color:#222;transform:scaleX(0.870);transform-origin:right">421.4M</span>
<span class="t" style="left:164.85px;top:474.00px;font-size:8.57px;color:#222;transform:scaleX(0.870);transform-origin:right">10.6k</span>
<span class="t" style="left:209.63px;top:474.00px;font-size:8.57px;color:#222;transform:scaleX(0.870);transform-origin:right">0</span>
<span class="t" style="left:241.01px;top:474.00px;font-size:8.57px;color:#222;transform:scaleX(0.870);transform-origin:right">3.8k</span>
<span class="t" style="left:280.21px;top:474.00px;font-size:8.57px;color:#222;transform:scaleX(0.870);transform-origin:right">1.4k</span>
<span class="t" style="left:313.50px;top:474.00px;font-size:8.57px;color:#222;transform:scaleX(0.870);transform-origin:right">315</span>
<span class="t" style="left:366.12px;top:474.00px;font-size:8.57px;color:#222;transform:scaleX(0.870);transform-origin:center">0</span>
<span class="t" style="left:413.40px;top:356.00px;font-size:8.57px;color:#1a7cc4;transform:scaleX(0.879);transform-origin:left">None</span>
<span class="t" style="left:484.00px;top:356.00px;font-size:8.57px;color:#1a7cc4;transform:scaleX(0.869);transform-origin:left">None</span>
<span class="t" style="left:530.51px;top:356.00px;font-size:8.57px;color:#222;transform:scaleX(0.870);transform-origin:right">441.2G</span>
<span class="t" style="left:572.05px;top:356.00px;font-size:8.57px;color:#222;transform:scaleX(0.870);transform-origin:right">89.3k</span>
<span class="t" style="left:609.40px;top:356.00px;font-size:8.57px;color:#222;transform:scaleX(0.870);transform-origin:right">722</span>
<span class="t" style="left:650.61px;top:356.00px;font-size:8.57px;color:#222;transform:scaleX(0.870);transform-origin:right">5.7k</span>
<span class="t" style="left:684.05px;top:356.00px;font-size:8.57px;color:#222;transform:scaleX(0.870);transform-origin:right">10.1k</span>
<span class="t" style="left:723.40px;top:356.00px;font-size:8.57px;color:#222;transform:scaleX(0.870);transform-origin:right">215</span>
<span class="t" style="left:775.62px;top:356.00px;font-size:8.57px;color:#222;transform:scaleX(0.870);transform-origin:center">0</span>
<span class="t" style="left:413.40px;top:369.00px;font-size:8.57px;color:#1a7cc4;transform:scaleX(0.847);transform-origin:left">marsha.wirth</span>
<span class="t" style="left:484.00px;top:369.00px;font-size:8.57px;color:#1a7cc4;transform:scaleX(0.869);transform-origin:left">None</span>
<span class="t" style="left:540.02px;top:369.00px;font-size:8.57px;color:#222;transform:scaleX(0.870);transform-origin:right">1.4G</span>
<span class="t" style="left:576.81px;top:369.00px;font-size:8.57px;color:#222;transform:scaleX(0.870);transform-origin:right">1.4k</span>
<span class="t" style="left:609.40px;top:369.00px;font-size:8.57px;color:#222;transform:scaleX(0.870);transform-origin:right">762</span>
<span class="t" style="left:652.50px;top:369.00px;font-size:8.57px;color:#222;transform:scaleX(0.870);transform-origin:right">952</span>
<span class="t" style="left:688.81px;top:369.00px;font-size:8.57px;color:#222;transform:scaleX(0.870);transform-origin:right">1.1k</span>
<span class="t" style="left:728.17px;top:369.00px;font-size:8.57px;color:#222;transform:scaleX(0.870);transform-origin:right">14</span>
<span class="t" style="left:775.62px;top:369.00px;font-size:8.57px;color:#222;transform:scaleX(0.870);transform-origin:center">0</span>
<span class="t" style="left:413.40px;top:382.00px;font-size:8.57px;color:#1a7cc4;transform:scaleX(0.833);transform-origin:left">lucas.johnston</span>
<span class="t" style="left:484.00px;top:382.00px;font-size:8.57px;color:#1a7cc4;transform:scaleX(0.869);transform-origin:left">None</span>
<span class="t" style="left:530.04px;top:382.00px;font-size:8.57px;color:#222;transform:scaleX(0.870);transform-origin:right">658.8M</span>
<span class="t" style="left:578.70px;top:382.00px;font-size:8.57px;color:#222;transform:scaleX(0.870);transform-origin:right">742</span>
<span class="t" style="left:617.43px;top:382.00px;font-size:8.57px;color:#222;transform:scaleX(0.870);transform-origin:right">0</span>
<span class="t" style="left:660.53px;top:382.00px;font-size:8.57px;color:#222;transform:scaleX(0.870);transform-origin:right">0</span>
<span class="t" style="left:700.23px;top:382.00px;font-size:8.57px;color:#222;transform:scaleX(0.870);transform-origin:right">4</span>
<span class="t" style="left:732.93px;top:382.00px;font-size:8.57px;color:#222;transform:scaleX(0.870);transform-origin:right">4</span>
<span class="t" style="left:775.62px;top:382.00px;font-size:8.57px;color:#222;transform:scaleX(0.870);transform-origin:center">0</span>
<span class="t" style="left:413.40px;top:396.00px;font-size:8.57px;color:#1a7cc4;transform:scaleX(0.833);transform-origin:left">clarence.hujer</span>
<span class="t" style="left:484.00px;top:396.00px;font-size:8.57px;color:#1a7cc4;transform:scaleX(0.869);transform-origin:left">None</span>
<span class="t" style="left:530.04px;top:396.00px;font-size:8.57px;color:#222;transform:scaleX(0.870);transform-origin:right">376.6M</span>
<span class="t" style="left:583.47px;top:396.00px;font-size:8.57px;color:#222;transform:scaleX(0.870);transform-origin:right">90</span>
<span class="t" style="left:617.43px;top:396.00px;font-size:8.57px;color:#222;transform:scaleX(0.870);transform-origin:right">0</span>
<span class="t" style="left:662.03px;top:396.00px;font-size:8.57px;color:#222;transform:scaleX(0.870);transform-origin:right">6</span>
<span class="t" style="left:695.47px;top:396.00px;font-size:8.57px;color:#222;transform:scaleX(0.870);transform-origin:right">14</span>
<span class="t" style="left:732.93px;top:396.00px;font-size:8.57px;color:#222;transform:scaleX(0.870);transform-origin:right">6</span>
<span class="t" style="left:775.62px;top:396.00px;font-size:8.57px;color:#222;transform:scaleX(0.870);transform-origin:center">0</span>
<span class="t" style="left:413.40px;top:409.00px;font-size:8.57px;color:#1a7cc4;transform:scaleX(0.879);transform-origin:left">None</span>
<span class="t" style="left:484.00px;top:409.00px;font-size:8.57px;color:#1a7cc4;transform:scaleX(0.849);transform-origin:left">david.poster</span>
<span class="t" style="left:530.04px;top:409.00px;font-size:8.57px;color:#222;transform:scaleX(0.870);transform-origin:right">259.6M</span>
<span class="t" style="left:576.81px;top:409.00px;font-size:8.57px;color:#222;transform:scaleX(0.870);transform-origin:right">7.3k</span>
<span class="t" style="left:617.43px;top:409.00px;font-size:8.57px;color:#222;transform:scaleX(0.870);transform-origin:right">0</span>
<span class="t" style="left:650.61px;top:409.00px;font-size:8.57px;color:#222;transform:scaleX(0.870);transform-origin:right">2.3k</span>
<span class="t" style="left:690.70px;top:409.00px;font-size:8.57px;color:#222;transform:scaleX(0.870);transform-origin:right">802</span>
<span class="t" style="left:732.93px;top:409.00px;font-size:8.57px;color:#222;transform:scaleX(0.870);transform-origin:right">6</span>
<span class="t" style="left:775.62px;top:409.00px;font-size:8.57px;color:#222;transform:scaleX(0.870);transform-origin:center">0</span>
<span class="t" style="left:413.40px;top:422.00px;font-size:8.57px;color:#1a7cc4;transform:scaleX(0.812);transform-origin:left">steven.sharma</span>
<span class="t" style="left:484.00px;top:422.00px;font-size:8.57px;color:#1a7cc4;transform:scaleX(0.869);transform-origin:left">None</span>
<span class="t" style="left:530.04px;top:422.00px;font-size:8.57px;color:#222;transform:scaleX(0.870);transform-origin:right">234.1M</span>
<span class="t" style="left:578.70px;top:422.00px;font-size:8.57px;color:#222;transform:scaleX(0.870);transform-origin:right">444</span>
<span class="t" style="left:617.43px;top:422.00px;font-size:8.57px;color:#222;transform:scaleX(0.870);transform-origin:right">0</span>
<span class="t" style="left:662.03px;top:422.00px;font-size:8.57px;color:#222;transform:scaleX(0.870);transform-origin:right">4</span>
<span class="t" style="left:690.70px;top:422.00px;font-size:8.57px;color:#222;transform:scaleX(0.870);transform-origin:right">236</span>
<span class="t" style="left:732.93px;top:422.00px;font-size:8.57px;color:#222;transform:scaleX(0.870);transform-origin:right">9</span>
<span class="t" style="left:775.62px;top:422.00px;font-size:8.57px;color:#222;transform:scaleX(0.870);transform-origin:center">0</span>
<span class="t" style="left:413.40px;top:435.00px;font-size:8.57px;color:#1a7cc4;transform:scaleX(0.848);transform-origin:left">patricia.enriqu</span>
<span class="t" style="left:484.00px;top:435.00px;font-size:8.57px;color:#1a7cc4;transform:scaleX(0.869);transform-origin:left">None</span>
<span class="t" style="left:530.04px;top:435.00px;font-size:8.57px;color:#222;transform:scaleX(0.870);transform-origin:right">197.7M</span>
<span class="t" style="left:576.81px;top:435.00px;font-size:8.57px;color:#222;transform:scaleX(0.870);transform-origin:right">1.5k</span>
<span class="t" style="left:617.43px;top:435.00px;font-size:8.57px;color:#222;transform:scaleX(0.870);transform-origin:right">0</span>
<span class="t" style="left:652.50px;top:435.00px;font-size:8.57px;color:#222;transform:scaleX(0.870);transform-origin:right">184</span>
<span class="t" style="left:690.70px;top:435.00px;font-size:8.57px;color:#222;transform:scaleX(0.870);transform-origin:right">664</span>
<span class="t" style="left:732.93px;top:435.00px;font-size:8.57px;color:#222;transform:scaleX(0.870);transform-origin:right">6</span>
<span class="t" style="left:775.62px;top:435.00px;font-size:8.57px;color:#222;transform:scaleX(0.870);transform-origin:center">0</span>
<span class="t" style="left:413.40px;top:448.00px;font-size:8.57px;color:#1a7cc4;transform:scaleX(0.879);transform-origin:left">None</span>
<span class="t" style="left:484.00px;top:448.00px;font-size:8.57px;color:#1a7cc4;transform:scaleX(0.830);transform-origin:left">steven.shar...</span>
<span class="t" style="left:530.04px;top:448.00px;font-size:8.57px;color:#222;transform:scaleX(0.870);transform-origin:right">197.4M</span>
<span class="t" style="left:578.70px;top:448.00px;font-size:8.57px;color:#222;transform:scaleX(0.870);transform-origin:right">546</span>
<span class="t" style="left:617.43px;top:448.00px;font-size:8.57px;color:#222;transform:scaleX(0.870);transform-origin:right">0</span>
<span class="t" style="left:660.53px;top:448.00px;font-size:8.57px;color:#222;transform:scaleX(0.870);transform-origin:right">0</span>
<span class="t" style="left:698.73px;top:448.00px;font-size:8.57px;color:#222;transform:scaleX(0.870);transform-origin:right">0</span>
<span class="t" style="left:732.93px;top:448.00px;font-size:8.57px;color:#222;transform:scaleX(0.870);transform-origin:right">4</span>
<span class="t" style="left:775.62px;top:448.00px;font-size:8.57px;color:#222;transform:scaleX(0.870);transform-origin:center">0</span>
<span class="t" style="left:413.40px;top:461.00px;font-size:8.57px;color:#1a7cc4;transform:scaleX(0.807);transform-origin:left">james.yaeger</span>
<span class="t" style="left:484.00px;top:461.00px;font-size:8.57px;color:#1a7cc4;transform:scaleX(0.869);transform-origin:left">None</span>
<span class="t" style="left:530.04px;top:461.00px;font-size:8.57px;color:#222;transform:scaleX(0.870);transform-origin:right">167.1M</span>
<span class="t" style="left:583.47px;top:461.00px;font-size:8.57px;color:#222;transform:scaleX(0.870);transform-origin:right">14</span>
<span class="t" style="left:617.43px;top:461.00px;font-size:8.57px;color:#222;transform:scaleX(0.870);transform-origin:right">0</span>
<span class="t" style="left:660.53px;top:461.00px;font-size:8.57px;color:#222;transform:scaleX(0.870);transform-origin:right">0</span>
<span class="t" style="left:698.73px;top:461.00px;font-size:8.57px;color:#222;transform:scaleX(0.870);transform-origin:right">0</span>
<span class="t" style="left:732.93px;top:461.00px;font-size:8.57px;color:#222;transform:scaleX(0.870);transform-origin:right">1</span>
<span class="t" style="left:775.62px;top:461.00px;font-size:8.57px;color:#222;transform:scaleX(0.870);transform-origin:center">0</span>
<span class="t" style="left:413.40px;top:474.00px;font-size:8.57px;color:#1a7cc4;transform:scaleX(0.863);transform-origin:left">aaron.smith</span>
<span class="t" style="left:484.00px;top:474.00px;font-size:8.57px;color:#1a7cc4;transform:scaleX(0.869);transform-origin:left">None</span>
<span class="t" style="left:530.04px;top:474.00px;font-size:8.57px;color:#222;transform:scaleX(0.870);transform-origin:right">122.4M</span>
<span class="t" style="left:578.70px;top:474.00px;font-size:8.57px;color:#222;transform:scaleX(0.870);transform-origin:right">664</span>
<span class="t" style="left:617.43px;top:474.00px;font-size:8.57px;color:#222;transform:scaleX(0.870);transform-origin:right">0</span>
<span class="t" style="left:657.27px;top:474.00px;font-size:8.57px;color:#222;transform:scaleX(0.870);transform-origin:right">34</span>
<span class="t" style="left:690.70px;top:474.00px;font-size:8.57px;color:#222;transform:scaleX(0.870);transform-origin:right">800</span>
<span class="t" style="left:732.93px;top:474.00px;font-size:8.57px;color:#222;transform:scaleX(0.870);transform-origin:right">2</span>
<span class="t" style="left:775.62px;top:474.00px;font-size:8.57px;color:#222;transform:scaleX(0.870);transform-origin:center">0</span>
<span class="t" style="left:407.60px;top:127.00px;font-size:8.71px;color:#2a2a2a">User Activity</span>
</div></div>
</body></html>
